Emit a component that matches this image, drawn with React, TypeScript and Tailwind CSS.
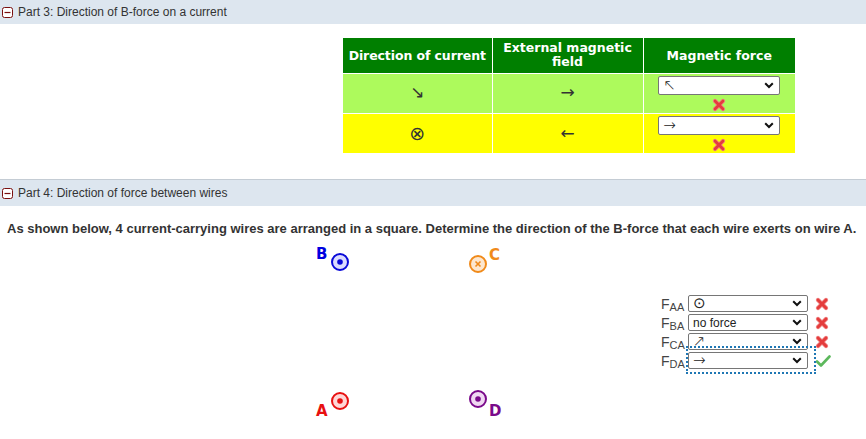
import React from "react";

const ARROW_FONT = '"DejaVu Sans", "Noto Sans", sans-serif';

function MinusBox() {
  return (
    <svg width="11" height="11" viewBox="0 0 11 11" className="shrink-0">
      <rect x="0.5" y="0.5" width="10" height="10" rx="2" fill="#fff" stroke="#7a1010" />
      <line x1="2.5" y1="5.5" x2="8.5" y2="5.5" stroke="#7a1010" strokeWidth="1.2" />
    </svg>
  );
}

function RedX() {
  return (
    <svg width="14" height="14" viewBox="0 0 14 14" className="shrink-0">
      <g stroke="#f08080" strokeWidth="4.2" strokeLinecap="round">
        <line x1="3" y1="3" x2="11" y2="11" />
        <line x1="11" y1="3" x2="3" y2="11" />
      </g>
      <g stroke="#e43d3d" strokeWidth="2.6" strokeLinecap="round">
        <line x1="3" y1="3" x2="11" y2="11" />
        <line x1="11" y1="3" x2="3" y2="11" />
      </g>
    </svg>
  );
}

function Check() {
  return (
    <svg width="16" height="14" viewBox="0 0 16 14" className="shrink-0">
      <path d="M2 7.5 L6 11.5 L14.5 2.5" fill="none" stroke="#5cb85c" strokeWidth="2.6" strokeLinecap="round" strokeLinejoin="round" />
    </svg>
  );
}

function Chevron() {
  return (
    <svg width="10" height="7" viewBox="0 0 10 7" className="shrink-0">
      <path d="M1.2 1.2 L5 5 L8.8 1.2" fill="none" stroke="#111" strokeWidth="2" />
    </svg>
  );
}

function FakeSelect({ value, w, h, glyph }: { value: string; w: string; h: string; glyph?: boolean }) {
  return (
    <div
      className={`${w} ${h} flex items-center justify-between bg-white border border-[#767676] rounded-[2px] pl-[4px] pr-[5px] text-[#222] leading-none`}
    >
      {glyph ? (
        <span className="text-[15px] font-light" style={{ fontFamily: ARROW_FONT }}>
          {value}
        </span>
      ) : (
        <span className="text-[12px]">{value}</span>
      )}
      <Chevron />
    </div>
  );
}

function Wire({ color, tint, kind }: { color: string; tint: string; kind: "out" | "in" }) {
  return (
    <svg width="20" height="20" viewBox="0 0 20 20">
      <circle cx="10" cy="10" r="8" fill={tint} stroke={color} strokeWidth="2" />
      {kind === "out" ? (
        <circle cx="10" cy="10" r="2.8" fill={color} />
      ) : (
        <g stroke={color} strokeWidth="1.6">
          <line x1="7.5" y1="7.5" x2="12.5" y2="12.5" />
          <line x1="12.5" y1="7.5" x2="7.5" y2="12.5" />
        </g>
      )}
    </svg>
  );
}

function SectionBar({ title, border }: { title: string; border?: boolean }) {
  return (
    <div
      className={`flex items-center gap-[5px] pl-[2px] bg-[#dde6ef] text-[12px] text-[#333] ${
        border ? "h-[27px] border-t border-[#c4ccd4]" : "h-[24px]"
      }`}
    >
      <MinusBox />
      <span>{title}</span>
    </div>
  );
}

function Glyph({ children, size }: { children: string; size: string }) {
  return (
    <span className={`${size} text-[#333]`} style={{ fontFamily: ARROW_FONT }}>
      {children}
    </span>
  );
}

const forces = [
  { sub: "AA", value: "⊙", ok: false, glyph: true },
  { sub: "BA", value: "no force", ok: false, glyph: false },
  { sub: "CA", value: "↗", ok: false, glyph: true },
  { sub: "DA", value: "→", ok: true, glyph: true },
];

export default function App() {
  return (
    <div className="w-[866px] h-[439px] overflow-hidden bg-white" style={{ fontFamily: '"Liberation Sans", Arial, sans-serif' }}>
      <SectionBar title="Part 3: Direction of B-force on a current" />

      <div className="pt-[14px] pb-[26px] pl-[343px]">
        <table
          className="border-collapse text-[12.5px]"
          style={{ fontFamily: '"DejaVu Sans", Verdana, sans-serif' }}
        >
          <thead>
            <tr className="bg-[#007f00] text-white font-bold h-[35px]">
              <th className="w-[149px] border-r border-white leading-[14px] whitespace-nowrap tracking-[-0.1px] pt-[2px]">Direction of current</th>
              <th className="w-[151px] border-r border-white leading-[14px]">
                External magnetic
                <br />
                field
              </th>
              <th className="w-[152px] leading-[14px] pt-[2px]">Magnetic force</th>
            </tr>
          </thead>
          <tbody>
            <tr className="bg-[#adfa5c] h-[40px] border-t border-white">
              <td className="text-center border-r border-white"><Glyph size="text-[17px]">↘</Glyph></td>
              <td className="text-center border-r border-white"><Glyph size="text-[17px]">→</Glyph></td>
              <td className="align-top pt-[2px]">
                <div className="flex flex-col items-center gap-[3px]">
                  <FakeSelect value="↖" w="w-[122px]" h="h-[19px]" glyph />
                  <RedX />
                </div>
              </td>
            </tr>
            <tr className="bg-[#ffff00] h-[40px] border-t border-white">
              <td className="text-center border-r border-white"><Glyph size="text-[19px]">⊗</Glyph></td>
              <td className="text-center border-r border-white"><Glyph size="text-[17px]">←</Glyph></td>
              <td className="align-top pt-[2px]">
                <div className="flex flex-col items-center gap-[3px]">
                  <FakeSelect value="→" w="w-[122px]" h="h-[19px]" glyph />
                  <RedX />
                </div>
              </td>
            </tr>
          </tbody>
        </table>
      </div>

      <SectionBar title="Part 4: Direction of force between wires" border />

      <p className="mt-[15px] pl-[7px] text-[13px] leading-[16px] font-bold text-[#333] whitespace-nowrap">
        As shown below, 4 current-carrying wires are arranged in a square. Determine the direction of the B-force that each wire exerts on wire A.
      </p>

      <div className="flex">
        <div className="relative w-[661px] h-[204px] shrink-0">
          <span className="absolute left-[316px] top-[6px] text-[15px] font-bold text-[#0000e0]" style={{ fontFamily: '"DejaVu Sans", sans-serif' }}>B</span>
          <div className="absolute left-[330px] top-[15px]">
            <Wire color="#0a0ad8" tint="#dcdcff" kind="out" />
          </div>

          <div className="absolute left-[468px] top-[17px]">
            <Wire color="#f08a1a" tint="#fde7cf" kind="in" />
          </div>
          <span className="absolute left-[489px] top-[7px] text-[15px] font-bold text-[#f08a1a]" style={{ fontFamily: '"DejaVu Sans", sans-serif' }}>C</span>

          <span className="absolute left-[316px] top-[163px] text-[15px] font-bold text-[#e81010]" style={{ fontFamily: '"DejaVu Sans", sans-serif' }}>A</span>
          <div className="absolute left-[330px] top-[154px]">
            <Wire color="#e81010" tint="#ffd6d6" kind="out" />
          </div>

          <div className="absolute left-[468px] top-[152px]">
            <Wire color="#7a0a8a" tint="#f0d8f2" kind="out" />
          </div>
          <span className="absolute left-[489px] top-[163px] text-[15px] font-bold text-[#7a0a8a]" style={{ fontFamily: '"DejaVu Sans", sans-serif' }}>D</span>
        </div>

        <div className="pt-[58px] flex flex-col gap-[2px]">
          {forces.map((f) => (
            <div key={f.sub} className="relative flex items-center h-[17px]">
              <span className="w-[27px] text-[14px] text-[#444] leading-none">
                F<sub className="text-[11px]">{f.sub}</sub>
              </span>
              <FakeSelect value={f.value} w="w-[120px]" h="h-[17px]" glyph={f.glyph} />
              <span className="ml-[7px] flex items-center">{f.ok ? <Check /> : <RedX />}</span>
              {f.ok && (
                <div className="absolute left-[25px] -top-[6px] w-[130px] h-[28px] border-2 border-dotted border-[#1f77b4]" />
              )}
            </div>
          ))}
        </div>
      </div>
    </div>
  );
}
